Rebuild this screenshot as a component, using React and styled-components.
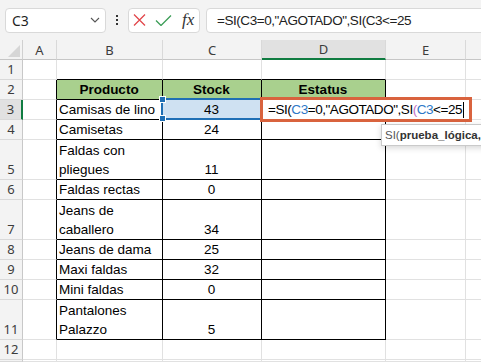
import styled, { createGlobalStyle } from "styled-components";

const GlobalStyle = createGlobalStyle`
  html, body {
    margin: 0;
    padding: 0;
    background: #fff;
    overflow: hidden;
  }
  body {
    font-family: "Liberation Sans", Arial, sans-serif;
  }
`;

const Window = styled.div`
  width: 481px;
  height: 362px;
  overflow: hidden;
`;

const Toolbar = styled.div`
  height: 40px;
  box-sizing: border-box;
  display: flex;
  align-items: center;
  padding-left: 5px;
  background: #f3f3f3;
`;

const Box = styled.div`
  height: 25px;
  box-sizing: border-box;
  display: flex;
  align-items: center;
  background: #fff;
  border: 1px solid #d9d9d9;
  border-radius: 4px;
`;

const NameBox = styled(Box)`
  width: 101px;
  padding: 0 5px 0 6px;
  justify-content: space-between;
  font-family: "Noto Sans", sans-serif;
  font-size: 14px;
  color: #1f1f1f;
`;

const Dots = styled.div`
  display: flex;
  flex-direction: column;
  gap: 2px;
  margin: 0 10px;
  span {
    width: 2px;
    height: 2px;
    background: #333;
  }
`;

const Controls = styled(Box)`
  width: 72px;
  padding-left: 4px;
  gap: 9px;
`;

const Fx = styled.span`
  font-family: "Liberation Serif", serif;
  font-style: italic;
  font-size: 17px;
  color: #333;
  margin-left: 1px;
`;

const FormulaBox = styled(Box)`
  flex: 1;
  margin-left: 6px;
  margin-right: -12px;
  padding-left: 10px;
  font-size: 13.5px;
  letter-spacing: -0.45px;
  color: #222;
  white-space: nowrap;
`;

const Sheet = styled.div`
  display: grid;
  grid-template-columns: 23px 34px 106px 99px 124px 80px 40px;
`;

const Corner = styled.div`
  height: 20px;
  box-sizing: border-box;
  display: flex;
  align-items: flex-end;
  justify-content: flex-end;
  padding: 0 2px 2px 0;
  background: #f3f3f3;
  border-right: 1px solid #d0d0d0;
  border-bottom: 1px solid #c6c6c6;
`;

const ColHead = styled.div`
  height: 20px;
  box-sizing: border-box;
  display: flex;
  align-items: center;
  justify-content: center;
  background: ${(p) => (p.$active ? "#e1e1e1" : "#f3f3f3")};
  border-right: 1px solid #d9d9d9;
  border-bottom: ${(p) => (p.$active ? "2px solid #107c41" : "1px solid #c6c6c6")};
  font-family: "Noto Sans", sans-serif;
  font-size: 13px;
  color: #3c3c3c;
`;

const RowHead = styled.div`
  height: ${(p) => p.$h}px;
  box-sizing: border-box;
  display: flex;
  align-items: flex-end;
  justify-content: center;
  background: ${(p) => (p.$active ? "#e1e1e1" : "#f3f3f3")};
  border-right: ${(p) => (p.$active ? "2px solid #107c41" : "1px solid #c8c8c8")};
  border-bottom: 1px solid #d9d9d9;
  font-family: "Noto Sans", sans-serif;
  font-size: 13px;
  line-height: 19px;
  color: #3c3c3c;
`;

const Cell = styled.div`
  position: relative;
  height: ${(p) => p.$h}px;
  box-sizing: border-box;
  display: flex;
  flex-direction: column;
  justify-content: flex-end;
  align-items: ${(p) => (p.$center ? "center" : "flex-start")};
  padding: 0 3px 0 2px;
  background: ${(p) => p.$fill};
  border-right: 1px solid ${(p) => p.$r};
  border-bottom: 1px solid ${(p) => p.$b};
  font-size: 13.5px;
  line-height: 19px;
  font-weight: ${(p) => (p.$bold ? 700 : 400)};
  color: #000;
  white-space: nowrap;
`;

const Selection = styled.div`
  position: absolute;
  left: -2px;
  top: -2px;
  right: -1px;
  bottom: -1px;
  border: 2px solid #1f6fb5;
  pointer-events: none;
  z-index: 2;
`;

const Handle = styled.span`
  position: absolute;
  left: -4px;
  ${(p) => (p.$bottom ? "bottom: -4px;" : "top: -4px;")}
  width: 5px;
  height: 5px;
  background: #1f6fb5;
  border: 1px solid #fff;
`;

const EditBox = styled.div`
  position: absolute;
  left: -2px;
  top: -3px;
  width: 212px;
  height: 25px;
  box-sizing: border-box;
  border: 3px solid #d9633e;
  background: #fff;
  padding-left: 5px;
  display: flex;
  align-items: center;
  font-size: 13.5px;
  letter-spacing: -0.45px;
  font-weight: 400;
  z-index: 5;
`;

const Ref = styled.span`
  color: #2e78c7;
`;

const Paren = styled.span`
  color: #c26fc4;
`;

const Caret = styled.span`
  display: inline-block;
  width: 1px;
  height: 16px;
  background: #000;
  margin-left: 1px;
  vertical-align: middle;
`;

const Tip = styled.div`
  position: absolute;
  left: 119px;
  top: 24px;
  height: 22px;
  box-sizing: border-box;
  padding-left: 3px;
  display: flex;
  align-items: center;
  background: #fff;
  border: 1px solid #cacaca;
  box-shadow: 0 2px 6px rgba(0, 0, 0, 0.16);
  font-size: 11.5px;
  color: #555;
  z-index: 6;
  b {
    color: #333;
  }
`;

const TipNext = styled.span`
  display: inline-block;
  width: 12px;
  height: 16px;
  margin-left: 3px;
  background: #fcf5c0;
`;

const COLS = ["A", "B", "C", "D", "E", "F"];

const ROWS = [
  { n: 1, h: 20 },
  { n: 2, h: 20, header: true, B: ["Producto"], C: ["Stock"], D: ["Estatus"] },
  { n: 3, h: 20, B: ["Camisas de lino"], C: ["43"] },
  { n: 4, h: 20, B: ["Camisetas"], C: ["24"] },
  { n: 5, h: 40, B: ["Faldas con", "pliegues"], C: ["11"] },
  { n: 6, h: 20, B: ["Faldas rectas"], C: ["0"] },
  { n: 7, h: 40, B: ["Jeans de", "caballero"], C: ["34"] },
  { n: 8, h: 20, B: ["Jeans de dama"], C: ["25"] },
  { n: 9, h: 20, B: ["Maxi faldas"], C: ["32"] },
  { n: 10, h: 20, B: ["Mini faldas"], C: ["0"] },
  { n: 11, h: 40, B: ["Pantalones", "Palazzo"], C: ["5"] },
  { n: 12, h: 20 },
  { n: 13, h: 2, hideNumber: true },
];

const inTable = (c, r) => ["B", "C", "D"].includes(c) && r >= 2 && r <= 11;

function Chevron() {
  return (
    <svg width="10" height="6" viewBox="0 0 10 6">
      <path d="M1 1l4 4 4-4" fill="none" stroke="#555" strokeWidth="1.1" />
    </svg>
  );
}

function CancelIcon() {
  return (
    <svg width="13" height="12" viewBox="0 0 13 12">
      <path d="M1 0.5l11 11M12 0.5l-11 11" stroke="#e2474b" strokeWidth="1.3" />
    </svg>
  );
}

function CheckIcon() {
  return (
    <svg width="17" height="11" viewBox="0 0 17 11">
      <path d="M1 5.5l5 5 10-10" fill="none" stroke="#3c9d57" strokeWidth="1.3" />
    </svg>
  );
}

function CornerMark() {
  return (
    <svg width="12" height="12" viewBox="0 0 12 12">
      <polygon points="12,0 12,12 0,12" fill="#d6d6d6" />
    </svg>
  );
}

function EditFormula() {
  return (
    <>
      =SI(<Ref>C3</Ref>=0,"AGOTADO",SI<Paren>(</Paren>
      <Ref>C3</Ref>&lt;=25
      <Caret />
    </>
  );
}

function DataCell({ row, col }) {
  const idx = COLS.indexOf(col);
  const next = COLS[idx + 1];
  const right = inTable(col, row.n) || inTable(next, row.n) ? "#000" : "#e1e1e1";
  const bottom = inTable(col, row.n) || inTable(col, row.n + 1) ? "#000" : "#e1e1e1";
  let fill = "#fff";
  if (row.header && inTable(col, row.n)) fill = "#a9d08e";
  const selected = row.n === 3 && col === "C";
  const editing = row.n === 3 && col === "D";
  if (selected) fill = "#cfe1f2";
  const lines = row[col] || [];
  return (
    <Cell
      $h={row.h}
      $r={right}
      $b={bottom}
      $fill={fill}
      $center={col !== "B" || row.header}
      $bold={row.header}
    >
      {lines.map((t) => (
        <span key={t}>{t}</span>
      ))}
      {selected && (
        <Selection>
          <Handle />
          <Handle $bottom />
        </Selection>
      )}
      {editing && (
        <>
          <EditBox>
            <span>
              <EditFormula />
            </span>
          </EditBox>
          <Tip>
            SI(<b>prueba_lógica,</b>
            <TipNext />
          </Tip>
        </>
      )}
    </Cell>
  );
}

function Row({ row }) {
  return (
    <>
      <RowHead $h={row.h} $active={row.n === 3}>
        {row.hideNumber ? null : row.n}
      </RowHead>
      {COLS.map((c) => (
        <DataCell key={c} row={row} col={c} />
      ))}
    </>
  );
}

export default function App() {
  return (
    <Window>
      <GlobalStyle />
      <Toolbar>
        <NameBox>
          <span>C3</span>
          <Chevron />
        </NameBox>
        <Dots>
          <span />
          <span />
          <span />
        </Dots>
        <Controls>
          <CancelIcon />
          <CheckIcon />
          <Fx>fx</Fx>
        </Controls>
        <FormulaBox>=SI(C3=0,"AGOTADO",SI(C3&lt;=25</FormulaBox>
      </Toolbar>
      <Sheet>
        <Corner>
          <CornerMark />
        </Corner>
        {COLS.map((c) => (
          <ColHead key={c} $active={c === "D"}>
            {c === "F" ? null : c}
          </ColHead>
        ))}
        {ROWS.map((row) => (
          <Row key={row.n} row={row} />
        ))}
      </Sheet>
    </Window>
  );
}
